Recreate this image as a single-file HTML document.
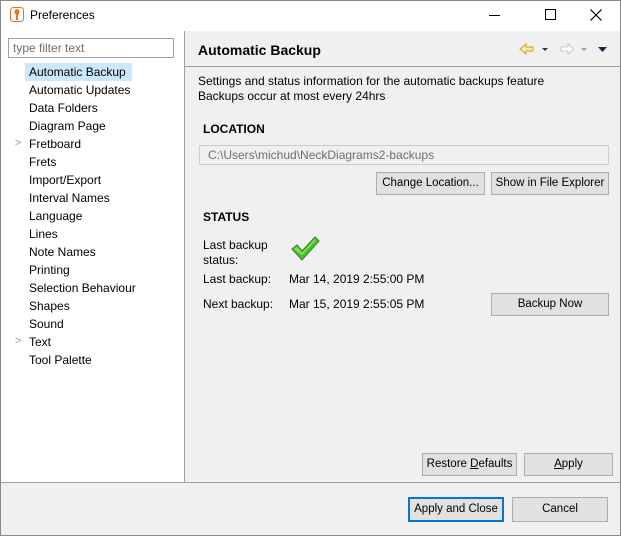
<!DOCTYPE html>
<html><head><style>
*{box-sizing:border-box;margin:0;padding:0}
body{width:621px;height:536px;position:relative;font-family:"Liberation Sans",sans-serif;font-size:12px;color:#000;background:#fff;overflow:hidden}
.a{position:absolute}
.btn{position:absolute;background:#e1e1e1;border:1px solid #adadad;text-align:center;font-size:11.5px;line-height:20px;white-space:nowrap}
.item{position:absolute;left:29px;height:18px;line-height:18px;white-space:nowrap}
.chev{position:absolute;left:15px;color:#999;font-size:11px}
</style></head><body>
<div class="a" style="left:0;top:0;width:621px;height:536px;border:1px solid #888"></div>
<svg class="a" style="left:10px;top:7px" width="14" height="16"><rect x="0.5" y="0.5" width="13" height="14" rx="3" fill="#fff" stroke="#e8702a"/><ellipse cx="7" cy="5" rx="2.5" ry="3" fill="#e8702a"/><rect x="6" y="7" width="2" height="6" fill="#e8702a"/></svg>
<div class="a" style="left:30px;top:8px;font-size:12px">Preferences</div>
<div class="a" style="left:489px;top:15px;width:11px;height:1px;background:#000"></div>
<div class="a" style="left:545px;top:9px;width:11px;height:11px;border:1px solid #000"></div>
<svg class="a" style="left:590px;top:9px" width="12" height="12"><path d="M0.5 0.5 L11.5 11.5 M11.5 0.5 L0.5 11.5" stroke="#000" stroke-width="1.2"/></svg>
<div class="a" style="left:8px;top:38px;width:166px;height:20px;border:1px solid #a0a0a0;color:#6d6d6d;padding-left:4px;line-height:18px">type filter text</div>
<div class="a" style="left:25px;top:63px;width:107px;height:18px;background:#cce8ff"></div>
<div class="item" style="top:63px">Automatic Backup</div>
<div class="item" style="top:81px">Automatic Updates</div>
<div class="item" style="top:99px">Data Folders</div>
<div class="item" style="top:117px">Diagram Page</div>
<div class="chev" style="top:137px">&gt;</div><div class="item" style="top:135px">Fretboard</div>
<div class="item" style="top:153px">Frets</div>
<div class="item" style="top:171px">Import/Export</div>
<div class="item" style="top:189px">Interval Names</div>
<div class="item" style="top:207px">Language</div>
<div class="item" style="top:225px">Lines</div>
<div class="item" style="top:243px">Note Names</div>
<div class="item" style="top:261px">Printing</div>
<div class="item" style="top:279px">Selection Behaviour</div>
<div class="item" style="top:297px">Shapes</div>
<div class="item" style="top:315px">Sound</div>
<div class="chev" style="top:335px">&gt;</div><div class="item" style="top:333px">Text</div>
<div class="item" style="top:351px">Tool Palette</div>
<div class="a" style="left:184px;top:31px;width:436px;height:451px;background:#f0f0f0;border-left:1px solid #a0a0a0"></div>
<div class="a" style="left:185px;top:66px;width:435px;height:1px;background:#a0a0a0"></div>
<div class="a" style="left:198px;top:42px;font-size:14px;font-weight:bold">Automatic Backup</div>
<svg class="a" style="left:518px;top:41px" width="95" height="16">
<path d="M2 8 L8 3 L8 6 L15 6 L15 10 L8 10 L8 13 Z" fill="#fde9b0" stroke="#d89c2a"/>
<path d="M24 7 L30 7 L27 10Z" fill="#333"/>
<path d="M56 8 L50 3 L50 6 L43 6 L43 10 L50 10 L50 13 Z" fill="#fff" stroke="#c8c8c8"/>
<path d="M63 7 L69 7 L66 10Z" fill="#999"/>
<path d="M80 6 L89 6 L84.5 11Z" fill="#2a1f4a"/>
</svg>
<div class="a" style="left:198px;top:74px;line-height:15px">Settings and status information for the automatic backups feature<br>Backups occur at most every 24hrs</div>
<div class="a" style="left:203px;top:122px;font-weight:bold">LOCATION</div>
<div class="a" style="left:199px;top:145px;width:410px;height:20px;border:1px solid #ccc;background:#f0f0f0;color:#6d6d6d;padding-left:8px;line-height:18px">C:\Users\michud\NeckDiagrams2-backups</div>
<div class="btn" style="left:376px;top:172px;width:109px;height:23px">Change Location...</div>
<div class="btn" style="left:491px;top:172px;width:118px;height:23px">Show in File Explorer</div>
<div class="a" style="left:203px;top:210px;font-weight:bold">STATUS</div>
<div class="a" style="left:203px;top:238px;line-height:15px">Last backup<br>status:</div>
<svg class="a" style="left:289px;top:234px" width="32" height="28"><path d="M3 15 L8 11 L13 17 L26 3 L30 7 L13 26 Z" fill="#4cbf2a" stroke="#2f8a1a" stroke-width="1"/><path d="M5 15 L8 13 L13 19 L26 5 L27 6 L13 21Z" fill="#8ee06a"/></svg>
<div class="a" style="left:203px;top:272px">Last backup:</div>
<div class="a" style="left:289px;top:272px">Mar 14, 2019 2:55:00 PM</div>
<div class="a" style="left:203px;top:297px">Next backup:</div>
<div class="a" style="left:289px;top:297px">Mar 15, 2019 2:55:05 PM</div>
<div class="btn" style="left:491px;top:293px;width:118px;height:23px">Backup Now</div>
<div class="btn" style="left:422px;top:453px;width:95px;height:23px">Restore <u>D</u>efaults</div>
<div class="btn" style="left:524px;top:453px;width:89px;height:23px"><u>A</u>pply</div>
<div class="a" style="left:1px;top:482px;width:619px;height:53px;background:#f0f0f0;border-top:1px solid #a0a0a0"></div>
<div class="btn" style="left:408px;top:497px;width:96px;height:25px;border:2px solid #0078d7;line-height:21px">Apply and Close</div>
<div class="btn" style="left:512px;top:497px;width:96px;height:25px;line-height:23px">Cancel</div>
</body></html>
